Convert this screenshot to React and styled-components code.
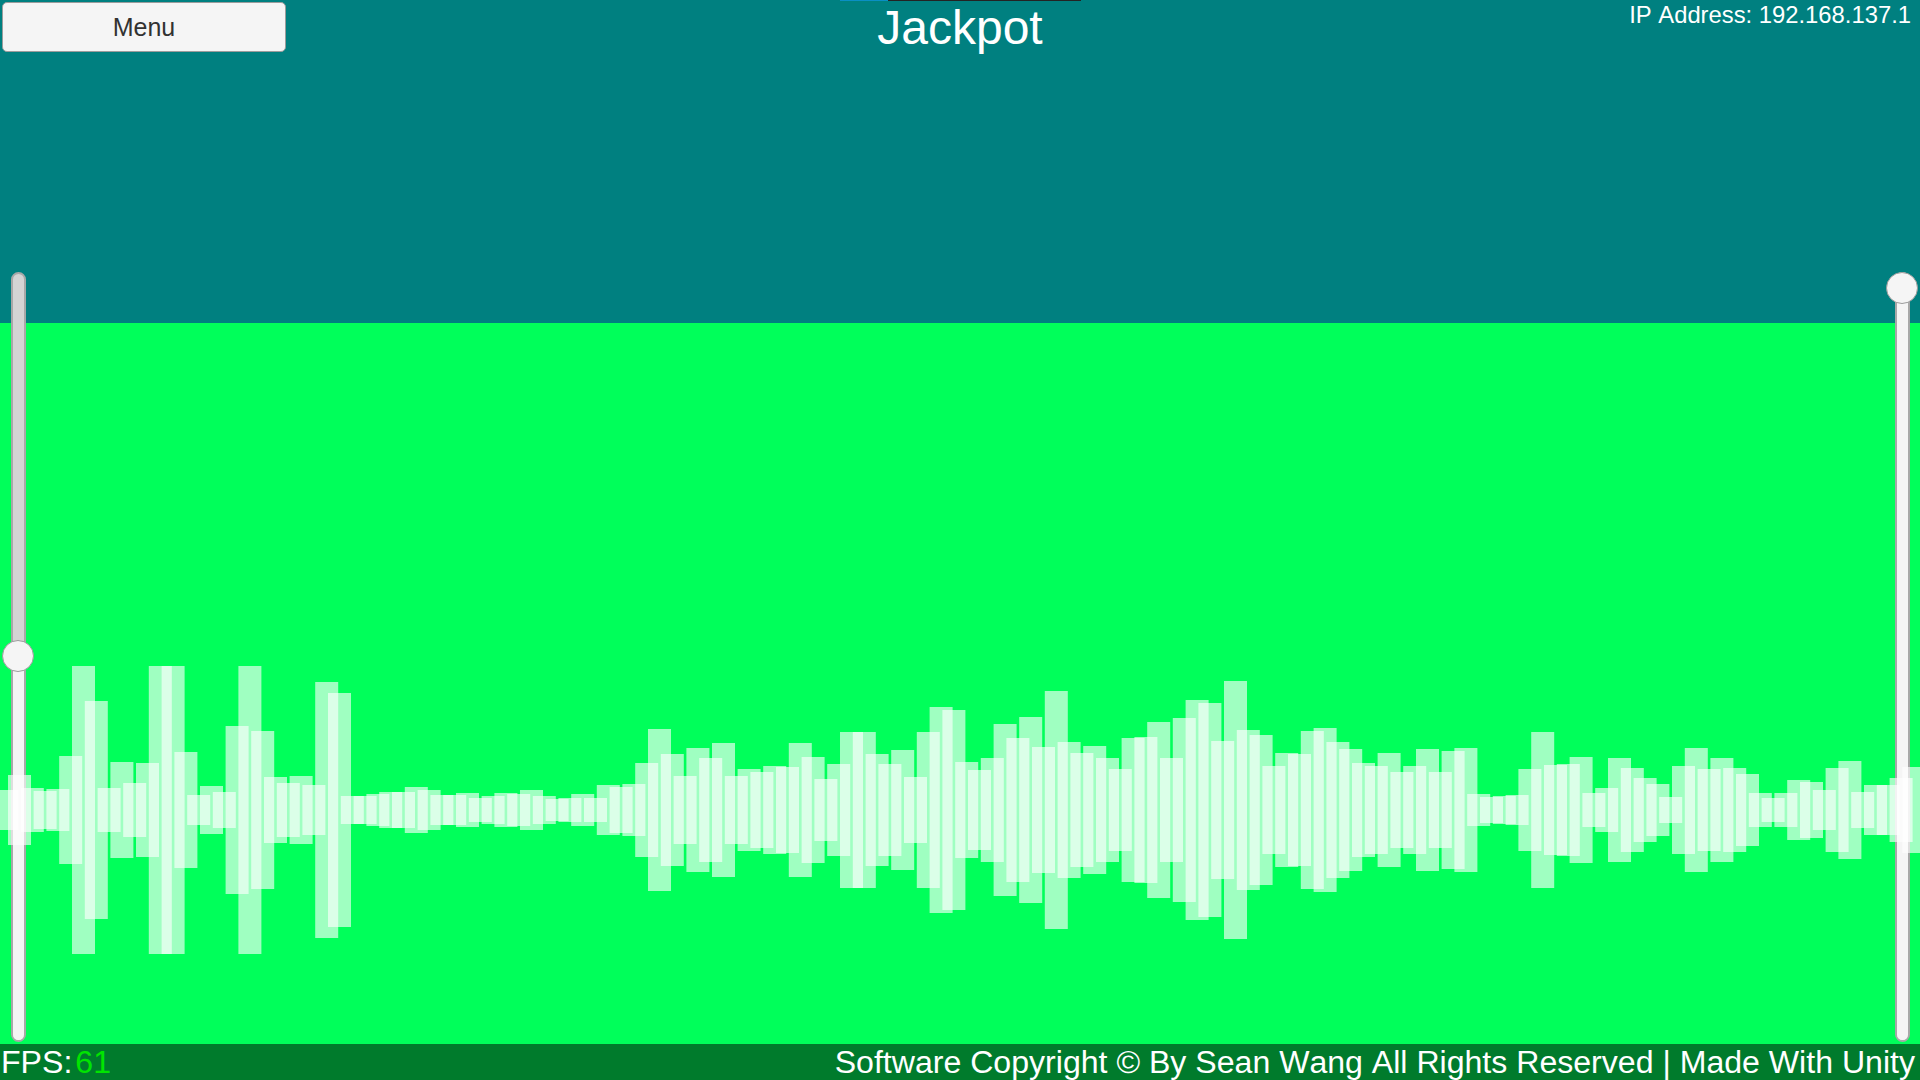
import React from "react";
import styled, { createGlobalStyle } from "styled-components";

// half height of every spectrum bar, left to right
const bars = [
  20, 35, 22, 19, 21, 54, 144, 109, 22, 48, 27, 47, 144, 144, 58, 15, 24, 18, 84, 144,
  79, 33, 27, 34, 25, 128, 117, 14, 14, 16, 18, 18, 23, 20, 15, 15, 17, 12, 14, 17,
  16, 20, 14, 11, 12, 16, 12, 25, 23, 26, 47, 81, 56, 34, 62, 52, 67, 34, 41, 38,
  44, 43, 67, 53, 31, 46, 78, 78, 56, 46, 60, 33, 78, 103, 100, 48, 40, 52, 86, 72,
  93, 63, 119, 68, 57, 64, 52, 41, 72, 73, 88, 52, 92, 110, 107, 69, 129, 80, 75, 44,
  57, 56, 79, 82, 68, 61, 47, 44, 57, 38, 44, 61, 38, 59, 62, 16, 13, 14, 15, 41,
  78, 45, 46, 53, 17, 22, 52, 42, 32, 26, 13, 44, 62, 41, 52, 42, 36, 17, 12, 17,
  30, 28, 20, 42, 49, 18, 25, 25, 32, 43,
];

const GlobalStyle = createGlobalStyle`
  html, body {
    margin: 0;
    padding: 0;
    overflow: hidden;
    background: #008080;
  }
`;

const Page = styled.div`
  position: relative;
  width: 1920px;
  height: 1080px;
  overflow: hidden;
  font-family: "Liberation Sans", Arial, sans-serif;
  font-kerning: none;

  display: flex;
  flex-direction: column;
`;

const Header = styled.header`
  height: 323px;
  flex-shrink: 0;
  background: #008080;
  padding: 2px 2px 0;
  box-sizing: border-box;

  display: grid;
  grid-template-columns: 1fr auto 1fr;
  align-items: start;
`;

const MenuButton = styled.button`
  width: 284px;
  height: 50px;
  padding: 0;
  box-sizing: border-box;
  background: #f5f5f5;
  border: 1px solid #9c9c9c;
  border-radius: 5px;
  color: #323232;
  font-family: inherit;
  font-size: 25px;
`;

const Title = styled.h1`
  margin: -2px 0 0;
  color: #fff;
  font-size: 48px;
  font-weight: 400;
  line-height: 55px;
`;

const IpAddress = styled.div`
  justify-self: end;
  margin: -1px 7px 0 0;
  color: #fff;
  font-size: 23.8px;
  line-height: 27px;
`;

const Progress = styled.div`
  position: absolute;
  top: 0;
  left: 840px;
  width: 241px;
  height: 1px;
  background: #232323;
`;

const ProgressFill = styled.div`
  height: 100%;
  width: ${(props) => props.$value}%;
  background: #0a8fc4;
`;

const WavePanel = styled.main`
  position: relative;
  flex: 1;
  background: #00ff5a;
`;

const WaveSvg = styled.svg`
  position: absolute;
  z-index: 2;
  inset: 0;
  width: 100%;
  height: 100%;
`;

const Footer = styled.footer`
  height: 36px;
  flex-shrink: 0;
  background: #007b2c;
  padding: 0 5px 0 1px;
  color: #fff;
  font-size: 32.1px;
  line-height: 36px;
  white-space: nowrap;

  display: flex;
  justify-content: space-between;
`;

const Fps = styled.div`
  display: flex;
  gap: 3px;
`;

const FpsValue = styled.span`
  color: #00e400;
`;

const Rail = styled.div`
  position: absolute;
  z-index: 1;
  top: 272px;
  left: ${(props) => props.$left}px;
  width: 15px;
  height: 770px;
  box-sizing: border-box;
  background: #d4d4d4;
  border: 2px solid #a8a8a8;
  border-radius: 8px;
`;

const RailFill = styled.div`
  position: absolute;
  top: ${(props) => props.$handleY}px;
  left: 0;
  right: 0;
  bottom: 0;
  background: #f5f5f5;
  border-radius: 0 0 6px 6px;
`;

const Handle = styled.div`
  position: absolute;
  top: ${(props) => props.$handleY - 16}px;
  left: -11.5px;
  width: 32px;
  height: 32px;
  box-sizing: border-box;
  background: #f5f5f5;
  border: 1px solid #9c9c9c;
  border-radius: 50%;
`;

const Slider = ({ left, handleY }) => (
  <Rail $left={left}>
    <RailFill $handleY={handleY} />
    <Handle $handleY={handleY} />
  </Rail>
);

const Wave = () => (
  <WaveSvg viewBox="0 0 1920 721">
    {bars.map((half, i) => (
      <rect
        key={i}
        x={-4.8 + 12.8 * i}
        y={487 - half}
        width={23}
        height={half * 2}
        fill="#fff"
        fillOpacity="0.625"
      />
    ))}
  </WaveSvg>
);

export default function App() {
  return (
    <Page>
      <GlobalStyle />
      <Header>
        <MenuButton>Menu</MenuButton>
        <Title>Jackpot</Title>
        <IpAddress>IP Address: 192.168.137.1</IpAddress>
      </Header>
      <Progress>
        <ProgressFill $value={20} />
      </Progress>
      <WavePanel>
        <Wave />
      </WavePanel>
      <Footer>
        <Fps>
          <span>FPS:</span>
          <FpsValue>61</FpsValue>
        </Fps>
        <div>Software Copyright © By Sean Wang All Rights Reserved | Made With Unity</div>
      </Footer>
      <Slider left={11} handleY={381.5} />
      <Slider left={1895} handleY={14} />
    </Page>
  );
}
